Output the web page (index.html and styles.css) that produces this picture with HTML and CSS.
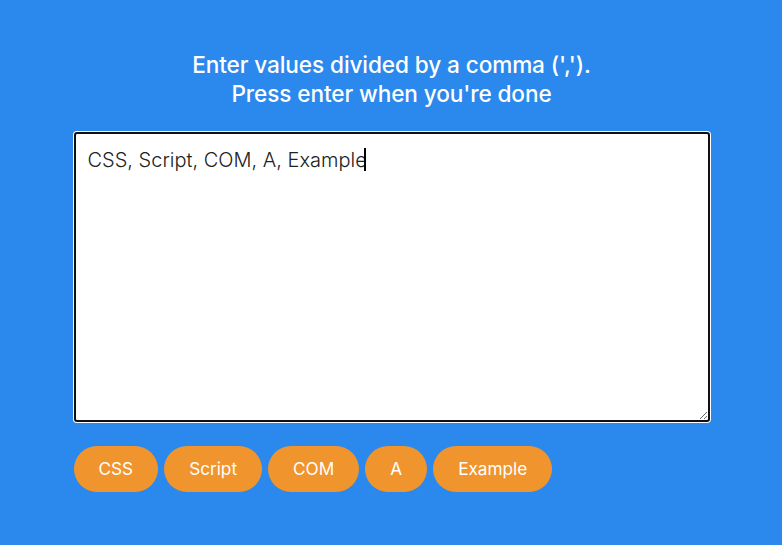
FILE: index.html
```html
<!DOCTYPE html>
<html lang="en">
<head>
<meta charset="utf-8">
<title>Tags input</title>
<link rel="stylesheet" href="styles.css">
</head>
<body>
<main class="container">
  <h3 class="title">Enter values divided by a comma (',').<br>Press enter when you're done</h3>
  <div class="field">
    <textarea class="input" id="input" spellcheck="false" autofocus>CSS, Script, COM, A, Example</textarea>
    <span class="caret" aria-hidden="true"></span>
  </div>
  <div class="tags">
    <span class="tag">CSS</span>
    <span class="tag">Script</span>
    <span class="tag">COM</span>
    <span class="tag">A</span>
    <span class="tag">Example</span>
  </div>
</main>
<script src="script.js"></script>
</body>
</html>
```
FILE: styles.css
```css
* { box-sizing: border-box; }
html, body { margin: 0; height: 100%; }
body {
  background: #2b88ec;
  font-family: Inter, "Noto Sans", sans-serif;
  display: flex;
  justify-content: center;
}
.container {
  width: 636px;
  padding-top: 50px;
  margin-left: 1px;
}
.title {
  margin: 0 0 24px;
  color: #fff;
  text-align: center;
  font-size: 22.6px;
  font-weight: 500;
  line-height: 29px;
  letter-spacing: -0.1px;
}
.field {
  position: relative;
}
.input {
  display: block;
  width: 636px;
  height: 290px;
  margin: 0;
  padding: 13px 12px;
  border: 2px solid #101010;
  border-radius: 3px;
  outline: none;
  box-shadow: 0 0 0 1px #fff;
  background: #fff;
  color: #222;
  font-family: Inter, "Noto Sans", sans-serif;
  font-size: 20px;
  font-weight: 300;
  line-height: 26px;
  caret-color: transparent;
}
.caret {
  position: absolute;
  left: 290px;
  top: 16px;
  width: 2px;
  height: 23px;
  background: #000;
}
.tags {
  display: flex;
  gap: 6px;
  margin-top: 24px;
}
.tag {
  height: 46px;
  padding: 0 25px 2px;
  display: inline-flex;
  align-items: center;
  border-radius: 23px;
  background: #f0942e;
  color: #fff;
  font-size: 17.2px;
}
```
FILE: script.js
```js
var t = document.getElementById('input');
t.focus();
t.setSelectionRange(t.value.length, t.value.length);
```
